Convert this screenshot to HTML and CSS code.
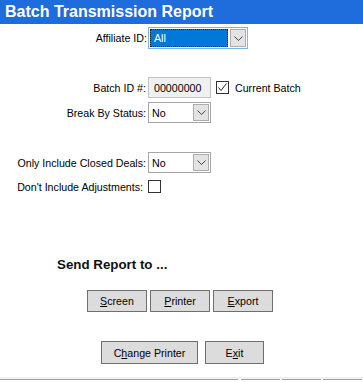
FILE: index.html
```html
<!DOCTYPE html>
<html lang="en">

<head>
    <meta charset="UTF-8" />
    <title>Batch Transmission Report</title>
    <link rel="stylesheet" href="styles.css">
</head>

<body>
    <header class="title-bar">
        <h1>Batch Transmission Report</h1>
    </header>

    <div class="form">
        <div class="row row-affiliate">
            <span class="label">Affiliate ID:</span>
            <div class="select select-focus">
                <span class="select-text"><span class="focus-box">All</span></span>
                <span class="drop-btn">
                    <svg width="9" height="5" viewBox="0 0 9 5"><path d="M0.5 0.5 L4.5 4.5 L8.5 0.5" fill="none" stroke="#444" stroke-width="1"/></svg>
                </span>
            </div>
        </div>

        <div class="row row-batch">
            <span class="label">Batch ID #:</span>
            <div class="textbox">00000000</div>
            <span class="checkbox checked">
                <svg width="11" height="11" viewBox="0 0 11 11"><path d="M1.5 5.5 L4 8.5 L9.5 1.5" fill="none" stroke="#222" stroke-width="1"/></svg>
            </span>
            <span class="check-label">Current Batch</span>
        </div>

        <div class="row row-status">
            <span class="label">Break By Status:</span>
            <div class="select">
                <span class="select-text">No</span>
                <span class="drop-btn">
                    <svg width="9" height="5" viewBox="0 0 9 5"><path d="M0.5 0.5 L4.5 4.5 L8.5 0.5" fill="none" stroke="#444" stroke-width="1"/></svg>
                </span>
            </div>
        </div>

        <div class="row row-closed">
            <span class="label">Only Include Closed Deals:</span>
            <div class="select">
                <span class="select-text">No</span>
                <span class="drop-btn">
                    <svg width="9" height="5" viewBox="0 0 9 5"><path d="M0.5 0.5 L4.5 4.5 L8.5 0.5" fill="none" stroke="#444" stroke-width="1"/></svg>
                </span>
            </div>
        </div>

        <div class="row row-adjust">
            <span class="label label-check">Don't Include Adjustments:</span>
            <span class="checkbox"></span>
        </div>
    </div>

    <h2 class="send-title">Send Report to ...</h2>

    <div class="buttons buttons-send">
        <button class="btn"><u>S</u>creen</button>
        <button class="btn"><u>P</u>rinter</button>
        <button class="btn"><u>E</u>xport</button>
    </div>

    <div class="buttons buttons-bottom">
        <button class="btn btn-wide">C<u>h</u>ange Printer</button>
        <button class="btn">E<u>x</u>it</button>
    </div>

    <footer class="status-bar">
        <span class="panel panel-main"></span>
        <span class="panel"></span>
        <span class="panel"></span>
        <span class="panel"></span>
    </footer>
</body>

</html>
```

FILE: styles.css
```css
body {
    margin: 0;
    background-color: white;
    color: black;
    font-family: "Liberation Sans", Arial, sans-serif;
    font-size: 8pt;
    height: 382px;
    overflow: hidden;
}

.title-bar {
    background-color: #1f6cdc;
    height: 24px;
    padding-left: 5px;
}

.title-bar h1 {
    margin: 0;
    color: white;
    font-size: 16px;
    line-height: 24px;
    font-weight: bold;
}

.form {
    display: flex;
    flex-direction: column;
}

.row {
    display: flex;
    align-items: center;
    height: 21px;
}

.label {
    width: 148px;
    text-align: right;
    padding-right: 2px;
    box-sizing: border-box;
    flex-shrink: 0;
}

.label-check {
    padding-right: 5px;
}

.row-affiliate {
    margin-top: 3px;
    height: 22px;
}

.row-batch {
    margin-top: 28px;
}

.row-status {
    margin-top: 4px;
}

.row-closed {
    margin-top: 29px;
}

.row-adjust {
    margin-top: 7px;
    height: 13px;
}

.row-affiliate .label {
    padding-right: 1px;
}

.select {
    display: flex;
    width: 63px;
    height: 21px;
    box-sizing: border-box;
    border: 1px solid #a6a6a6;
    background: white;
    padding: 1px;
}

.select-text {
    flex: 1;
    display: flex;
    align-items: center;
    padding-left: 2px;
}

.select-focus {
    width: 100px;
    height: 22px;
    border-color: #7eb4ea;
}

.select-focus .select-text {
    padding-left: 0;
    background: #0078d7;
    margin-right: 2px;
}

.focus-box {
    flex: 1;
    align-self: stretch;
    display: flex;
    align-items: center;
    padding-left: 3px;
    color: white;
    border: 1px dotted #222;
}

.drop-btn {
    width: 16px;
    display: flex;
    align-items: center;
    justify-content: center;
    background: #e3e3e3;
    border: 1px solid #adadad;
    box-sizing: border-box;
}

.textbox {
    width: 63px;
    height: 21px;
    box-sizing: border-box;
    border: 1px solid #c4c4c4;
    background: #f0f0f0;
    padding-left: 5px;
    display: flex;
    align-items: center;
}

.checkbox {
    width: 13px;
    height: 13px;
    box-sizing: border-box;
    border: 1px solid #333;
    background: white;
    display: flex;
    align-items: center;
    justify-content: center;
}

.row-batch .checkbox {
    margin-left: 5px;
}

.check-label {
    margin-left: 6px;
}

.send-title {
    margin: 64px 0 0 57px;
    font-size: 10pt;
    line-height: 16px;
    font-weight: bold;
    color: #111;
}

.buttons {
    display: flex;
}

.buttons-send {
    margin-top: 17px;
    padding-left: 87px;
    gap: 3px;
}

.buttons-bottom {
    margin-top: 29px;
    padding-left: 101px;
    gap: 7px;
}

.btn {
    width: 60px;
    height: 22px;
    padding: 0;
    font-family: inherit;
    font-size: 8pt;
    color: black;
    background: #dcdcdc;
    border: 1px solid #6e6e6e;
}

.buttons-bottom .btn {
    height: 23px;
    width: 59px;
}

.buttons-bottom .btn-wide {
    width: 97px;
}

.status-bar {
    display: flex;
    gap: 2px;
    margin-top: 13px;
    height: 4px;
    border-top: 2px solid #f0f0f0;
}

.panel {
    width: 39px;
    border-top: 1px solid #a0a0a0;
}

.panel-main {
    width: 238px;
    margin-right: 1px;
}
```
